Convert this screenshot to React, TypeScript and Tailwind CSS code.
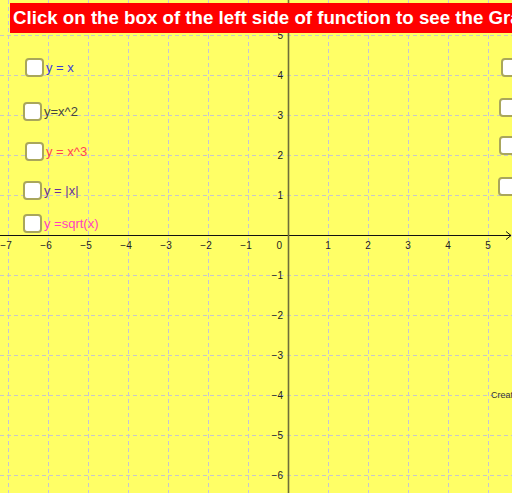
const ORIGIN_X = 288;
const ORIGIN_Y = 235;
const UNIT = 40;

const xTicks = [-7, -6, -5, -4, -3, -2, -1, 1, 2, 3, 4, 5];
const yTicks = [5, 4, 3, 2, 1, -1, -2, -3, -4, -5, -6];

const leftBoxes = [
  { top: 58, left: 25, label: "y = x", color: "text-[#3b3bdb]" },
  { top: 102, left: 23, label: "y=x^2", color: "text-[#444444]" },
  { top: 142, left: 25, label: "y = x^3", color: "text-[#ff3f55]" },
  { top: 181, left: 23, label: "y = |x|", color: "text-[#66339a]" },
  { top: 214, left: 23, label: "y =sqrt(x)", color: "text-[#ff3fbf]" },
];

const rightBoxes = [
  { top: 58, left: 501 },
  { top: 98, left: 499 },
  { top: 136, left: 499 },
  { top: 177, left: 498 },
];

function minus(n: number) {
  return n < 0 ? "\u2212" + Math.abs(n) : String(n);
}

function Grid() {
  const vLines = [];
  for (let i = -7; i <= 6; i++) vLines.push(ORIGIN_X + i * UNIT);
  const hLines = [];
  for (let j = -6; j <= 5; j++) hLines.push(ORIGIN_Y - j * UNIT);

  return (
    <svg width="512" height="493" className="absolute inset-0">
      {vLines.map((x) => (
        <line key={"v" + x} x1={x + 0.5} y1={0} x2={x + 0.5} y2={493} stroke="#c6c6d2" strokeDasharray="4 3" />
      ))}
      {hLines.map((y) => (
        <line key={"h" + y} x1={0} y1={y + 0.5} x2={512} y2={y + 0.5} stroke="#c8c8c8" strokeDasharray="4 3" />
      ))}
      {/* axes */}
      <line x1={0} y1={ORIGIN_Y + 0.5} x2={511} y2={ORIGIN_Y + 0.5} stroke="#111" />
      <path d="M506 231.5 L511 235.5 L506 239.5" fill="none" stroke="#111" />
      <line x1={ORIGIN_X + 0.5} y1={0} x2={ORIGIN_X + 0.5} y2={493} stroke="#6f6f3a" strokeWidth="1.6" />

      <g fontFamily="'Liberation Sans', Arial, sans-serif" fontSize="10" fill="#222">
        {xTicks.map((n) => (
          <text key={"x" + n} x={ORIGIN_X + n * UNIT - (n < 0 ? 2 : 0)} y={249} textAnchor="middle">
            {minus(n)}
          </text>
        ))}
        <text x={ORIGIN_X - 6} y={249} textAnchor="end">0</text>
        {yTicks.map((n) => (
          <text key={"y" + n} x={ORIGIN_X - 5} y={ORIGIN_Y - n * UNIT + 4} textAnchor="end">
            {minus(n)}
          </text>
        ))}
      </g>
    </svg>
  );
}

function Box({ top, left }: { top: number; left: number }) {
  return (
    <div
      className="absolute w-[19px] h-[19px] rounded-[4px] bg-white border-2 border-[#a9a65c]"
      style={{ top, left }}
    />
  );
}

export default function App() {
  return (
    <div className="relative w-[512px] h-[493px] overflow-hidden bg-[#ffff66] font-['Liberation_Sans',Arial,sans-serif]">
      <Grid />

      {/* title bar */}
      <div className="absolute top-[3px] left-[10px] right-0 h-[30px] bg-[#ff0000] flex items-center pl-[3px] overflow-hidden whitespace-nowrap">
        <span className="text-white font-bold text-[18.7px] leading-none">
          Click on the box of the left side of function to see the Graph
        </span>
      </div>

      {leftBoxes.map((b) => (
        <div key={b.label} className="absolute flex items-center" style={{ top: b.top, left: b.left }}>
          <div className="w-[19px] h-[19px] rounded-[4px] bg-white border-2 border-[#a9a65c]" />
          <span className={"ml-[2px] text-[13px] leading-none " + b.color}>{b.label}</span>
        </div>
      ))}

      {rightBoxes.map((b, i) => (
        <Box key={i} top={b.top} left={b.left} />
      ))}

      <span className="absolute top-[389px] left-[491px] text-[9px] text-[#333] whitespace-nowrap">Created with GeoGebra</span>
    </div>
  );
}
